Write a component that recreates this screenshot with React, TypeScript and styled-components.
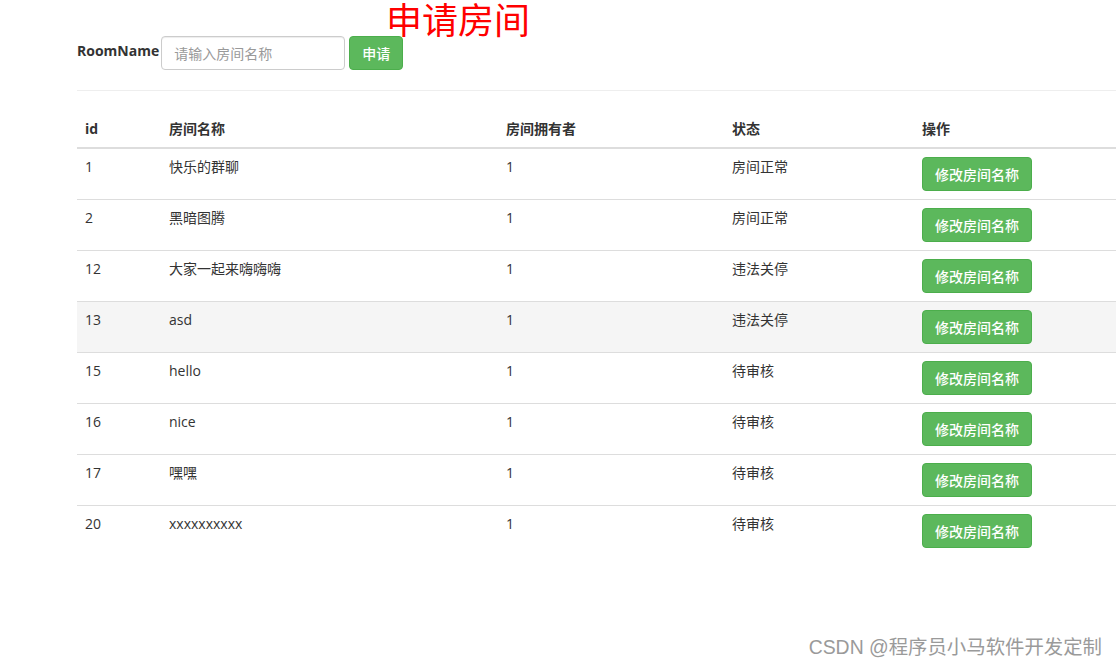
import React from "react";
import styled, { createGlobalStyle } from "styled-components";

const GlobalStyle = createGlobalStyle`
  * { box-sizing: border-box; }
  html, body {
    margin: 0;
    padding: 0;
    background: #fff;
    overflow: hidden;
  }
  body {
    font-family: "Open Sans", "Noto Sans CJK SC", sans-serif;
    font-size: 14px;
    line-height: 1.42857;
    color: #333;
  }
`;

/**
 * =================
 * Styled Components
 * =================
 */
const Page = styled.div`
  position: relative;
  width: 1116px;
  height: 666px;
  padding-left: 77px;
`;

const PageTitle = styled.h1`
  margin: 0 0 0 309px;
  padding-top: 1px;
  font-family: "Noto Sans CJK SC", sans-serif;
  font-size: 36px;
  font-weight: 400;
  line-height: 35px;
  color: #ff0000;
`;

const ApplyForm = styled.form`
  display: flex;
  align-items: center;
  gap: 4px;
  height: 34px;
`;

const Label = styled.label`
  font-weight: 700;
  margin-bottom: 4px;
  margin-right: -2px;
`;

const TextInput = styled.input`
  width: 184px;
  height: 34px;
  padding: 6px 12px;
  font-family: "Open Sans", "Noto Sans CJK SC", sans-serif;
  font-size: 14px;
  color: #555;
  border: 1px solid #ccc;
  border-radius: 4px;
  box-shadow: inset 0 1px 1px rgba(0, 0, 0, 0.075);
  outline: none;

  &::placeholder {
    color: #999;
  }
`;

const SuccessButton = styled.button`
  height: 34px;
  padding: 6px 12px;
  font-family: "Noto Sans CJK SC", sans-serif;
  font-size: 14px;
  font-weight: 500;
  line-height: 20px;
  color: #fff;
  background-color: #5cb85c;
  border: 1px solid #4cae4c;
  border-radius: 4px;
  white-space: nowrap;
  cursor: pointer;
`;

const Divider = styled.hr`
  margin: 20px 0;
  border: 0;
  border-top: 1px solid #eee;
`;

const Table = styled.table`
  width: 100%;
  table-layout: fixed;
  border-collapse: collapse;
  border-spacing: 0;
`;

const HeadCell = styled.th<{ w?: number }>`
  width: ${({ w }) => (w ? `${w}px` : "auto")};
  padding: 8px;
  text-align: left;
  font-weight: 700;
  line-height: 20px;
  vertical-align: bottom;
  border-bottom: 2px solid #ddd;
`;

const Row = styled.tr<{ hover?: boolean }>`
  background-color: ${({ hover }) => (hover ? "#f5f5f5" : "transparent")};

  &:not(:first-child) td {
    border-top: 1px solid #ddd;
  }
`;

const Cell = styled.td`
  padding: 8px;
  line-height: 20px;
  vertical-align: top;
`;

const Watermark = styled.div`
  position: absolute;
  right: 14px;
  bottom: 4px;
  font-family: "Liberation Sans", "Noto Sans CJK SC", sans-serif;
  font-size: 19.4px;
  color: #9a9a9a;
  text-shadow: 0 0 2px #fff;
`;

// =================================

type Room = {
  id: number;
  name: string;
  owner: number;
  status: string;
};

const rooms: Room[] = [
  { id: 1, name: "快乐的群聊", owner: 1, status: "房间正常" },
  { id: 2, name: "黑暗图腾", owner: 1, status: "房间正常" },
  { id: 12, name: "大家一起来嗨嗨嗨", owner: 1, status: "违法关停" },
  { id: 13, name: "asd", owner: 1, status: "违法关停" },
  { id: 15, name: "hello", owner: 1, status: "待审核" },
  { id: 16, name: "nice", owner: 1, status: "待审核" },
  { id: 17, name: "嘿嘿", owner: 1, status: "待审核" },
  { id: 20, name: "xxxxxxxxxx", owner: 1, status: "待审核" },
];

function App() {
  return (
    <Page>
      <GlobalStyle />
      <PageTitle>申请房间</PageTitle>
      <ApplyForm onSubmit={(e) => e.preventDefault()}>
        <Label htmlFor="roomName">RoomName</Label>
        <TextInput id="roomName" placeholder="请输入房间名称" />
        <SuccessButton type="submit">申请</SuccessButton>
      </ApplyForm>
      <Divider />
      <Table>
        <thead>
          <tr>
            <HeadCell w={84}>id</HeadCell>
            <HeadCell w={337}>房间名称</HeadCell>
            <HeadCell w={226}>房间拥有者</HeadCell>
            <HeadCell w={190}>状态</HeadCell>
            <HeadCell>操作</HeadCell>
          </tr>
        </thead>
        <tbody>
          {rooms.map((room) => (
            <Row key={room.id} hover={room.id === 13}>
              <Cell>{room.id}</Cell>
              <Cell>{room.name}</Cell>
              <Cell>{room.owner}</Cell>
              <Cell>{room.status}</Cell>
              <Cell>
                <SuccessButton type="button">修改房间名称</SuccessButton>
              </Cell>
            </Row>
          ))}
        </tbody>
      </Table>
      <Watermark>CSDN @程序员小马软件开发定制</Watermark>
    </Page>
  );
}

export default App;
